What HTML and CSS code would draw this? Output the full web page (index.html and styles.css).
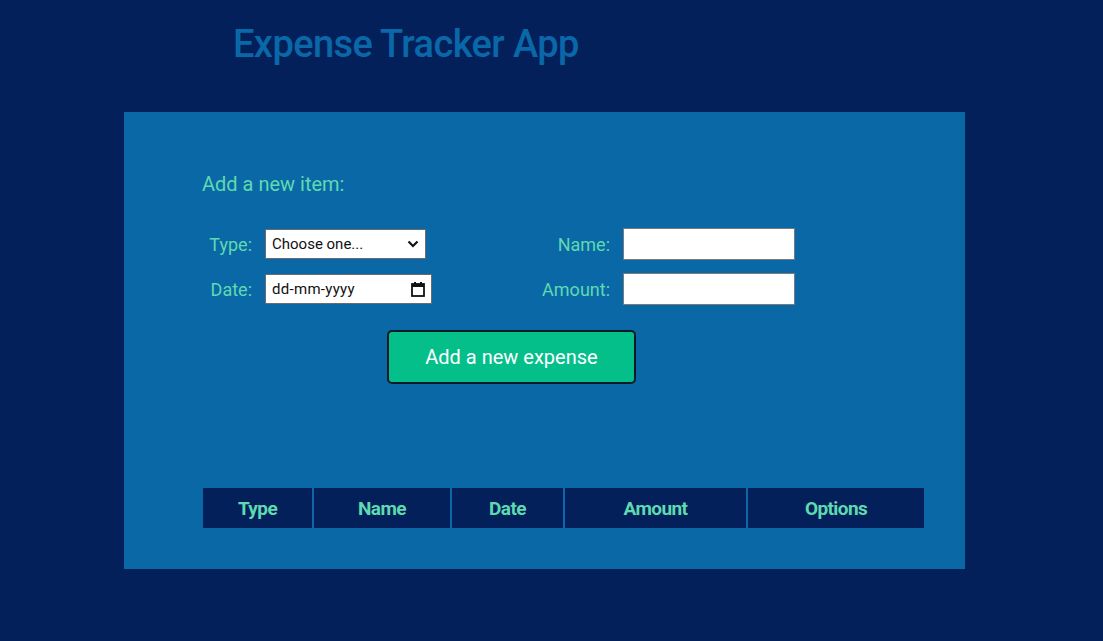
FILE: index.html
```html
<!DOCTYPE html>
<html lang="en">
<head>
<meta charset="utf-8">
<title>Expense Tracker App</title>
<link rel="stylesheet" href="styles.css">
</head>
<body>
<h1 class="title">Expense Tracker App</h1>
<main class="panel">
  <h2 class="form-title">Add a new item:</h2>
  <form class="form-grid">
    <label class="lbl lbl-left">Type:</label>
    <div class="fake-select">
      <span>Choose one...</span>
      <svg class="chev" width="12" height="8" viewBox="0 0 12 8"><path d="M1.5 1.5 L6 6 L10.5 1.5" fill="none" stroke="#111" stroke-width="2.2"/></svg>
    </div>
    <label class="lbl lbl-right">Name:</label>
    <div class="text-input"></div>

    <label class="lbl lbl-left">Date:</label>
    <div class="fake-date">
      <span>dd-mm-yyyy</span>
      <svg class="cal" width="14" height="15" viewBox="0 0 14 15"><rect x="1" y="2" width="12" height="12" fill="none" stroke="#111" stroke-width="1.8"/><rect x="1" y="2" width="12" height="3" fill="#111"/><rect x="3" y="0" width="2" height="3" fill="#111"/><rect x="9" y="0" width="2" height="3" fill="#111"/></svg>
    </div>
    <label class="lbl lbl-right">Amount:</label>
    <div class="text-input"></div>
  </form>
  <button class="add-btn" type="button">Add a new expense</button>
  <table class="expenses">
    <thead>
      <tr>
        <th class="c-type">Type</th>
        <th class="c-name">Name</th>
        <th class="c-date">Date</th>
        <th class="c-amount">Amount</th>
        <th class="c-options">Options</th>
      </tr>
    </thead>
  </table>
</main>
</body>
</html>
```
FILE: styles.css
```css
* { box-sizing: border-box; }
body {
  margin: 0;
  background: #03205b;
  font-family: Roboto, "Noto Sans", sans-serif;
  width: 1103px;
  height: 641px;
  overflow: hidden;
}
.title {
  margin: 0;
  padding: 20px 0 0 233px;
  height: 112px;
  font-size: 38px;
  font-weight: 500;
  line-height: 48px;
  color: #0a68a8;
  letter-spacing: -0.6px;
}
.panel {
  margin-left: 124px;
  width: 841px;
  height: 457px;
  background: #0a68a7;
  padding: 58px 0 0 78px;
}
.form-title {
  margin: 0;
  font-size: 20px;
  font-weight: 400;
  line-height: 28px;
  color: #5fd9b0;
}
.form-grid {
  margin-top: 30px;
  display: grid;
  grid-template-columns: 63px 177px 181px 172px;
  grid-auto-rows: 32px;
  row-gap: 13px;
  align-items: center;
}
.lbl {
  color: #5fd9b0;
  font-size: 18px;
  text-align: right;
}
.lbl-left { padding-right: 13px; }
.lbl-right { padding-right: 13px; }
.fake-select, .fake-date {
  background: #fff;
  border: 1px solid #6b6b6b;
  height: 30px;
  display: flex;
  align-items: center;
  justify-content: space-between;
  padding: 0 6px 0 6px;
  font-size: 15px;
  color: #111;
}
.fake-select { width: 161px; }
.fake-date { width: 167px; padding-right: 6px; }
.fake-date span { letter-spacing: 0.3px; }
.text-input {
  background: #fff;
  border: 1px solid #7a7a7a;
  height: 32px;
  width: 172px;
}
.add-btn {
  display: block;
  margin: 25px 0 0 185px;
  width: 249px;
  height: 54px;
  background: #05bf8b;
  border: 2px solid #0b1a26;
  border-radius: 5px;
  color: #fff;
  font-family: Roboto, "Noto Sans", sans-serif;
  font-size: 20px;
  padding: 0;
}
.expenses {
  margin: 104px 0 0 -1px;
  border-collapse: separate;
  border-spacing: 2px 0;
  width: 725px;
  table-layout: fixed;
}
.expenses th {
  background: #03205b;
  color: #5fd9b0;
  height: 40px;
  font-size: 19px;
  font-weight: 700;
  letter-spacing: -0.6px;
  padding: 0;
}
.c-type { width: 109px; }
.c-name { width: 136px; }
.c-date { width: 111px; }
.c-amount { width: 181px; }
.c-options { width: 176px; }
```
